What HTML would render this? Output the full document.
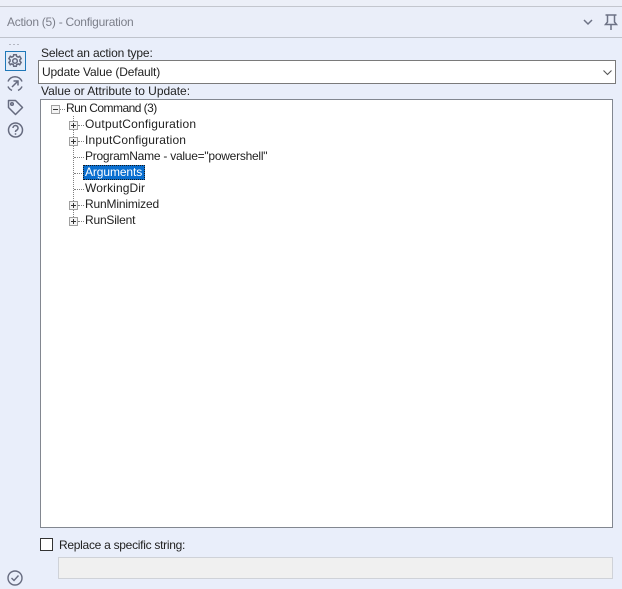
<!DOCTYPE html>
<html><head><meta charset="utf-8"><style>
html,body{margin:0;padding:0}
body{width:622px;height:589px;position:relative;overflow:hidden;background:#e9eefa;font-family:"Liberation Sans",sans-serif;font-size:12px;color:#222}
.a{position:absolute;white-space:nowrap;line-height:16px}
.box{position:absolute;box-sizing:border-box}
.pm{position:absolute;width:9px;height:9px;box-sizing:border-box;border:1px solid #a0a0a0;background:#f4f4f4}
.pm:before{content:"";position:absolute;left:1px;top:3px;width:5px;height:1px;background:#333}
.pm.p:after{content:"";position:absolute;left:3px;top:1px;width:1px;height:5px;background:#333}
.h{position:absolute;height:0;border-top:1px dotted #808080}
.v{position:absolute;width:0;border-left:1px dotted #808080}
.d{position:absolute;top:44px;width:2px;height:1px;background:#b4b7c2}
</style></head><body>
<div class="box" style="left:0;top:0;width:622px;height:7px;background:#eceff8;border-bottom:1px solid #c3c6ce"></div>
<div class="box" style="left:0;top:7px;width:622px;height:31px;background:#eaeef9;border-bottom:1px solid #bfc3cc"></div>
<div class="a" style="left:7px;top:14px;color:#7c7f8a;letter-spacing:-.27px">Action (5) - Configuration</div>
<svg class="box" style="left:580px;top:12px" width="40" height="20" fill="none" stroke="#6d7285" stroke-width="1.5"><path d="M4 8l4 4 4-4"/><path d="M25.500 3h11M27.500 3.500v6.500l-2 2.500h11l-2-2.500V3.500M31 13v5"/></svg>

<div class="d" style="left:9px"></div><div class="d" style="left:13px"></div><div class="d" style="left:17px"></div>
<div class="box" style="left:5px;top:51px;width:21px;height:20px;border:1px solid #1f78b8;background:#e3ebf7"></div>
<svg class="box" style="left:0;top:50px" width="30" height="92" fill="none" stroke="#666b7f" stroke-width="1.5">
<circle cx="15" cy="11" r="2.300"/><path d="M13.700 4.700h2.600l.4 1.700 1.500.7 1.500-.8 1.400 2.300-1.200 1.200v1.400l1.200 1.200-1.400 2.300-1.500-.8-1.500.7-.4 1.700h-2.600l-.4-1.700-1.500-.7-1.500.8-1.400-2.300 1.200-1.200v-1.400l-1.200-1.200 1.400-2.300 1.500.8 1.500-.7z"/>
<path d="M8 31.500a7.500 7.500 0 0 1 14 0M22 36.500a7.500 7.500 0 0 1-4 3.900M12 40.400a7.500 7.500 0 0 1-4-3.900"/><path d="M12 37l5.500-5.500M13.500 31h4.500v4.500"/>
<path d="M8.500 50.500h7l7 7-7 7-7-7z" stroke-linejoin="round"/><circle cx="12" cy="54" r="1.300"/>
<circle cx="15.500" cy="80" r="7"/><path d="M13 78a2.500 2.500 0 1 1 3.500 2.300c-.8.4-1 .9-1 1.700M15.500 83.300v1.400"/>
</svg>
<svg class="box" style="left:7px;top:570px" width="16" height="16" fill="none" stroke="#666b7f" stroke-width="1.4"><circle cx="8" cy="8" r="7"/><path d="M4.500 8l2.500 2.500 4.500-5"/></svg>

<div class="a" style="left:41px;top:45px;letter-spacing:-.14px">Select an action type:</div>
<div class="box" style="left:38px;top:60px;width:578px;height:24px;background:#fff;border:1px solid #7a7a7a"></div>
<div class="a" style="left:42px;top:64px;letter-spacing:-.14px">Update Value (Default)</div>
<svg class="box" style="left:602px;top:69px" width="11" height="7" fill="none" stroke="#555" stroke-width="1.100"><path d="M1.500 1.500l4 4 4-4"/></svg>
<div class="a" style="left:41px;top:83px;letter-spacing:-.03px">Value or Attribute to Update:</div>

<div class="box" style="left:40px;top:99px;width:573px;height:429px;background:#fff;border:1px solid #828790"></div>
<div class="v" style="left:73px;top:116px;height:107px"></div>
<div class="h" style="left:60px;top:109px;width:5px"></div>
<div class="h" style="left:78px;top:125px;width:6px"></div>
<div class="h" style="left:78px;top:141px;width:6px"></div>
<div class="h" style="left:74px;top:157px;width:10px"></div>
<div class="h" style="left:74px;top:173px;width:10px"></div>
<div class="h" style="left:74px;top:189px;width:10px"></div>
<div class="h" style="left:78px;top:205px;width:6px"></div>
<div class="h" style="left:78px;top:221px;width:6px"></div>
<div class="pm" style="left:51px;top:105px"></div>
<div class="pm p" style="left:69px;top:121px"></div>
<div class="pm p" style="left:69px;top:137px"></div>
<div class="pm p" style="left:69px;top:201px"></div>
<div class="pm p" style="left:69px;top:217px"></div>
<div class="a" style="left:66px;top:100px;letter-spacing:-.53px">Run Command (3)</div>
<div class="a" style="left:85px;top:116px;letter-spacing:.2px">OutputConfiguration</div>
<div class="a" style="left:85px;top:132px;letter-spacing:.17px">InputConfiguration</div>
<div class="a" style="left:85px;top:148px;letter-spacing:-.25px">ProgramName - value="powershell"</div>
<div class="box" style="left:83px;top:165px;width:62px;height:15px;background:#0a6fd0;border:1px dotted #1a1a1a"></div>
<div class="a" style="left:85px;top:164px;color:#fff;letter-spacing:-.1px">Arguments</div>
<div class="a" style="left:85px;top:180px;letter-spacing:.1px">WorkingDir</div>
<div class="a" style="left:85px;top:196px;letter-spacing:-.17px">RunMinimized</div>
<div class="a" style="left:85px;top:212px;letter-spacing:-.2px">RunSilent</div>

<div class="box" style="left:40px;top:538px;width:13px;height:13px;background:#fff;border:1px solid #333"></div>
<div class="a" style="left:59px;top:537px;letter-spacing:-.28px">Replace a specific string:</div>
<div class="box" style="left:58px;top:557px;width:555px;height:22px;background:#f0f0f0;border:1px solid #cfd2d8"></div>
</body></html>
